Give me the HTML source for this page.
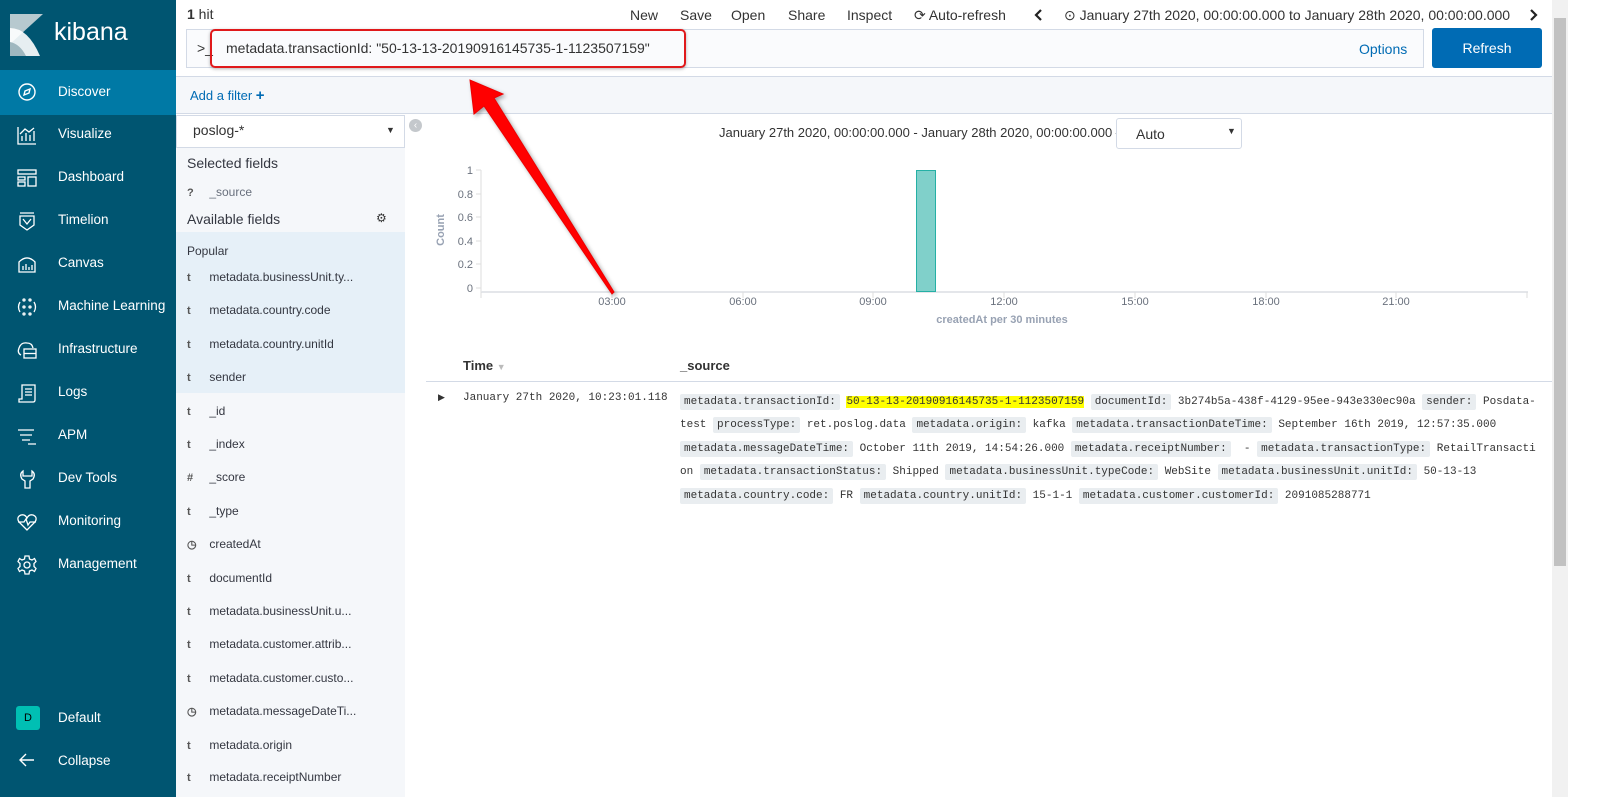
<!DOCTYPE html>
<html><head><meta charset="utf-8"><style>
*{margin:0;padding:0;box-sizing:border-box}
body{width:1600px;height:797px;overflow:hidden;font-family:"Liberation Sans",sans-serif;background:#fff;position:relative;color:#333}
.a{position:absolute;white-space:nowrap}
#side{position:absolute;left:0;top:0;width:176px;height:797px;background:#005571}
.nav{position:absolute;left:0;width:176px;height:43px;color:#fff;font-size:13.5px}
.nav span{position:absolute;left:58px;top:13px}
.nav svg{position:absolute;left:16px;top:11px}
.mono{font-family:"Liberation Mono",monospace;font-size:11px}
.k{background:#e9edf0;padding:2px 4px;border-radius:2px;color:#333;white-space:nowrap}
.f{position:absolute;left:187px;font-size:12px;color:#343741}
.f b{display:inline-block;width:19px;font-size:11px;color:#555}
</style></head><body>
<div id="side">
 <svg class="a" style="left:10px;top:14px" width="33" height="42" viewBox="0 0 33 42"><path d="M0 0H33L0 30Z" fill="#b7c9cf"/><path d="M0 14 Q18 14 30 42 H0Z" fill="#fff" opacity=".9"/><path d="M0 28 Q10 30 16 42H0Z" fill="#9fb7bf"/></svg>
 <div class="a" style="left:54px;top:18px;color:#fff;font-size:25px">kibana</div>
 <div class="nav" style="top:70px;height:45px;background:#0079a5"><svg width="22" height="22" viewBox="0 0 22 22" fill="none" stroke="#fff" stroke-width="1.4"><circle cx="11" cy="11" r="8"/><path d="M14 8 L9 10 L8 14 L13 12Z"/></svg><span style="top:14px">Discover</span></div>
 <div class="nav" style="top:113px"><svg width="22" height="22" viewBox="0 0 22 22" fill="none" stroke="#fff" stroke-width="1.3"><path d="M2 3V20H20M6 17V12M10 17V9M14 17V11M18 17V7M4 10L9 5L13 8L18 4"/></svg><span>Visualize</span></div>
 <div class="nav" style="top:156px"><svg width="22" height="22" viewBox="0 0 22 22" fill="none" stroke="#fff" stroke-width="1.3"><rect x="2" y="3" width="18" height="4"/><rect x="2" y="10" width="7" height="3"/><rect x="2" y="15" width="7" height="4"/><rect x="12" y="10" width="8" height="9"/></svg><span>Dashboard</span></div>
 <div class="nav" style="top:199px"><svg width="22" height="22" viewBox="0 0 22 22" fill="none" stroke="#fff" stroke-width="1.3"><path d="M4 3H18M4 6H18V15L11 20L4 15Z M7 9L11 14L15 9"/></svg><span>Timelion</span></div>
 <div class="nav" style="top:242px"><svg width="22" height="22" viewBox="0 0 22 22" fill="none" stroke="#fff" stroke-width="1.3"><path d="M3 9Q11 1 19 9V19H3Z M7 17V13M10 17V11M13 17V14M16 17V12"/></svg><span>Canvas</span></div>
 <div class="nav" style="top:285px"><svg width="22" height="22" viewBox="0 0 22 22" fill="none" stroke="#fff" stroke-width="1.3"><circle cx="8" cy="4" r="1"/><circle cx="14" cy="4" r="1"/><circle cx="8" cy="11" r="1"/><circle cx="14" cy="11" r="1"/><circle cx="8" cy="18" r="1"/><circle cx="14" cy="18" r="1"/><path d="M4 6Q1 11 4 16M18 6Q21 11 18 16"/></svg><span>Machine Learning</span></div>
 <div class="nav" style="top:328px"><svg width="22" height="22" viewBox="0 0 22 22" fill="none" stroke="#fff" stroke-width="1.3"><path d="M5 16Q1 14 3 9Q5 3 11 4Q16 4 17 9"/><rect x="8" y="10" width="12" height="9"/><path d="M8 14.5H20"/></svg><span>Infrastructure</span></div>
 <div class="nav" style="top:371px"><svg width="22" height="22" viewBox="0 0 22 22" fill="none" stroke="#fff" stroke-width="1.3"><path d="M6 3H19V18Q19 20 17 20H3V17H6Z M9 7H16M9 10H16M9 13H16"/></svg><span>Logs</span></div>
 <div class="nav" style="top:414px"><svg width="22" height="22" viewBox="0 0 22 22" fill="none" stroke="#fff" stroke-width="1.3"><path d="M2 5H18M4 10H16M6 15H14M12 19H20"/></svg><span>APM</span></div>
 <div class="nav" style="top:457px"><svg width="22" height="22" viewBox="0 0 22 22" fill="none" stroke="#fff" stroke-width="1.3"><path d="M7 3Q3 6 6 11L9 13V20H14V13L17 11Q20 6 16 3V8H7Z"/></svg><span>Dev Tools</span></div>
 <div class="nav" style="top:500px"><svg width="22" height="22" viewBox="0 0 22 22" fill="none" stroke="#fff" stroke-width="1.3"><path d="M11 19L3 11Q0 6 5 4Q9 3 11 7Q13 3 17 4Q22 6 19 11Z M2 11H8L10 8L12 14L14 11H20"/></svg><span>Monitoring</span></div>
 <div class="nav" style="top:543px"><svg width="22" height="22" viewBox="0 0 22 22" fill="none" stroke="#fff" stroke-width="1.3"><circle cx="11" cy="11" r="3"/><path d="M9 2H13L13.5 5L16 6L18.5 4.5L20 7.5L18 9.5V12.5L20 14.5L18.5 17.5L16 16L13.5 17L13 20H9L8.5 17L6 16L3.5 17.5L2 14.5L4 12.5V9.5L2 7.5L3.5 4.5L6 6L8.5 5Z"/></svg><span>Management</span></div>
 <div class="a" style="left:16px;top:706px;width:24px;height:24px;background:#00bfb3;border-radius:3px;color:#000;font-size:11px;text-align:center;line-height:24px">D</div>
 <div class="a" style="left:58px;top:710px;color:#fff;font-size:13.5px">Default</div>
 <svg class="a" style="left:18px;top:752px" width="18" height="16" viewBox="0 0 18 16" fill="none" stroke="#fff" stroke-width="1.4"><path d="M16 8H2M8 2L2 8L8 14"/></svg>
 <div class="a" style="left:58px;top:753px;color:#fff;font-size:13.5px">Collapse</div>
</div>

<div class="a" style="left:187px;top:6px;font-size:14px"><b>1</b> hit</div>
<div class="a" style="left:630px;top:7px;font-size:14px">New</div>
<div class="a" style="left:680px;top:7px;font-size:14px">Save</div>
<div class="a" style="left:731px;top:7px;font-size:14px">Open</div>
<div class="a" style="left:788px;top:7px;font-size:14px">Share</div>
<div class="a" style="left:847px;top:7px;font-size:14px">Inspect</div>
<div class="a" style="left:914px;top:7px;font-size:14px">⟳ Auto-refresh</div>
<svg class="a" style="left:1033px;top:8px" width="10" height="14" viewBox="0 0 10 14"><path d="M8 2L3 7L8 12" fill="none" stroke="#222" stroke-width="2.2"/></svg>
<div class="a" style="left:1064px;top:7px;font-size:14px">⊙ January 27th 2020, 00:00:00.000 to January 28th 2020, 00:00:00.000</div>
<svg class="a" style="left:1529px;top:8px" width="10" height="14" viewBox="0 0 10 14"><path d="M2 2L7 7L2 12" fill="none" stroke="#222" stroke-width="2.2"/></svg>
<div class="a" style="left:186px;top:29px;width:1238px;height:39px;background:#fafbfd;border:1px solid #d3dae6"></div>
<div class="a" style="left:197px;top:40px;font-size:14px">&gt;_</div>
<div class="a" style="left:226px;top:40px;font-size:14px;color:#333">metadata.transactionId: "50-13-13-20190916145735-1-1123507159"</div>
<div class="a" style="left:210px;top:29px;width:476px;height:39px;border:2px solid #e0191b;border-radius:5px;box-shadow:0 1px 3px rgba(0,0,0,.3)"></div>
<div class="a" style="left:1359px;top:41px;font-size:14px;color:#006bb4">Options</div>
<div class="a" style="left:1432px;top:28px;width:110px;height:40px;background:#006bb4;border-radius:3px;color:#fff;font-size:14px;text-align:center;line-height:40px">Refresh</div>
<div class="a" style="left:176px;top:76px;width:1376px;height:38px;background:#f5f7fa;border-top:1px solid #d3dae6;border-bottom:1px solid #d3dae6"></div>
<div class="a" style="left:190px;top:87px;font-size:13px;color:#006bb4">Add a filter <b style="font-size:15px">+</b></div>

<div class="a" style="left:176px;top:115px;width:229px;height:682px;background:#f5f7fa"></div>
<div class="a" style="left:176px;top:115px;width:229px;height:33px;background:#fff;border:1px solid #d3dae6"></div>
<div class="a" style="left:193px;top:122px;font-size:14px">poslog-*</div>
<div class="a" style="left:386px;top:125px;font-size:9px">▼</div>
<div class="a" style="left:409px;top:119px;width:13px;height:13px;border-radius:50%;background:#c4c8cc;color:#fff;font-size:10px;line-height:13px;text-align:center">‹</div>
<div class="a" style="left:187px;top:155px;font-size:14px;color:#343741">Selected fields</div>
<div class="f" style="top:185px;color:#69707d"><b>?</b> _source</div>
<div class="a" style="left:187px;top:211px;font-size:14px;color:#343741">Available fields</div>
<div class="a" style="left:376px;top:211px;font-size:12px">⚙</div>
<div class="a" style="left:176px;top:232px;width:229px;height:161px;background:#e6f0f8"></div>
<div class="a" style="left:187px;top:244px;font-size:12px;color:#343741">Popular</div>
<div class="f" style="top:270px"><b>t</b> metadata.businessUnit.ty...</div>
<div class="f" style="top:303px"><b>t</b> metadata.country.code</div>
<div class="f" style="top:337px"><b>t</b> metadata.country.unitId</div>
<div class="f" style="top:370px"><b>t</b> sender</div>
<div class="f" style="top:404px"><b>t</b> _id</div>
<div class="f" style="top:437px"><b>t</b> _index</div>
<div class="f" style="top:470px"><b>#</b> _score</div>
<div class="f" style="top:504px"><b>t</b> _type</div>
<div class="f" style="top:537px"><b>◷</b> createdAt</div>
<div class="f" style="top:571px"><b>t</b> documentId</div>
<div class="f" style="top:604px"><b>t</b> metadata.businessUnit.u...</div>
<div class="f" style="top:637px"><b>t</b> metadata.customer.attrib...</div>
<div class="f" style="top:671px"><b>t</b> metadata.customer.custo...</div>
<div class="f" style="top:704px"><b>◷</b> metadata.messageDateTi...</div>
<div class="f" style="top:738px"><b>t</b> metadata.origin</div>
<div class="f" style="top:770px"><b>t</b> metadata.receiptNumber</div>

<div class="a" style="left:719px;top:125px;font-size:13px">January 27th 2020, 00:00:00.000 - January 28th 2020, 00:00:00.000 —</div>
<div class="a" style="left:1116px;top:118px;width:126px;height:31px;border:1px solid #d3dae6;border-radius:3px;background:#fff"></div>
<div class="a" style="left:1136px;top:126px;font-size:14px">Auto</div>
<div class="a" style="left:1227px;top:126px;font-size:9px">▼</div>
<svg class="a" style="left:420px;top:150px" width="1120" height="190">
 <g font-family="Liberation Sans" font-size="11" fill="#6a717d">
  <text x="53" y="24" text-anchor="end">1</text><text x="53" y="48" text-anchor="end">0.8</text><text x="53" y="71" text-anchor="end">0.6</text><text x="53" y="95" text-anchor="end">0.4</text><text x="53" y="118" text-anchor="end">0.2</text><text x="53" y="142" text-anchor="end">0</text>
  <text transform="translate(24,80) rotate(-90)" text-anchor="middle" font-weight="bold" fill="#98a2b3">Count</text>
  <text x="192" y="155" text-anchor="middle">03:00</text><text x="323" y="155" text-anchor="middle">06:00</text><text x="453" y="155" text-anchor="middle">09:00</text><text x="584" y="155" text-anchor="middle">12:00</text><text x="715" y="155" text-anchor="middle">15:00</text><text x="846" y="155" text-anchor="middle">18:00</text><text x="976" y="155" text-anchor="middle">21:00</text>
  <text x="582" y="173" text-anchor="middle" font-weight="bold" fill="#98a2b3">createdAt per 30 minutes</text>
 </g>
 <path d="M61 20V142M56 20H61M56 44H61M56 67H61M56 91H61M56 114H61M56 138H61" stroke="#ddd"/>
 <path d="M61 142H1108" stroke="#e4e6ea" stroke-width="2"/>
 <path d="M61 142V148M192 142V148M323 142V148M453 142V148M584 142V148M715 142V148M846 142V148M976 142V148M1107 142V148" stroke="#ddd"/>
 <rect x="496.5" y="20.5" width="19" height="121" fill="#80d0ca" stroke="#25b0a5"/>
</svg>

<div class="a" style="left:463px;top:358px;font-size:13px;font-weight:bold;color:#333">Time <span style="color:#bbb;font-size:9px">▼</span></div>
<div class="a" style="left:680px;top:358px;font-size:13px;font-weight:bold;color:#333">_source</div>
<div class="a" style="left:426px;top:381px;width:1126px;height:1px;background:#d3dae6"></div>
<div class="a" style="left:438px;top:392px;font-size:9px">▶</div>
<div class="a mono" style="left:463px;top:392px">January 27th 2020, 10:23:01.118</div>
<div class="a mono" style="left:680px;top:391px;line-height:23.4px;white-space:normal;width:856px;word-break:break-all"><span class="k">metadata.transactionId:</span> <span style="background:#ff0">50-13-13-20190916145735-1-1123507159</span> <span class="k">documentId:</span> 3b274b5a-438f-4129-95ee-943e330ec90a <span class="k">sender:</span> Posdata-test <span class="k">processType:</span> ret.poslog.data <span class="k">metadata.origin:</span> kafka <span class="k">metadata.transactionDateTime:</span> September 16th 2019, 12:57:35.000 <span class="k">metadata.messageDateTime:</span> October 11th 2019, 14:54:26.000 <span class="k">metadata.receiptNumber:</span> &nbsp;- <span class="k">metadata.transactionType:</span> RetailTransaction <span class="k">metadata.transactionStatus:</span> Shipped <span class="k">metadata.businessUnit.typeCode:</span> WebSite <span class="k">metadata.businessUnit.unitId:</span> 50-13-13 <span class="k">metadata.country.code:</span> FR <span class="k">metadata.country.unitId:</span> 15-1-1 <span class="k">metadata.customer.customerId:</span> 2091085288771</div>

<div class="a" style="left:1552px;top:0;width:16px;height:797px;background:#f1f1f1"></div>
<div class="a" style="left:1554px;top:18px;width:12px;height:548px;background:#c1c1c1"></div>
<div class="a" style="left:1568px;top:0;width:32px;height:797px;background:#fff"></div>

<svg class="a" style="left:0;top:0" width="1600" height="797">
 <path d="M614 292 L494 98 L503 94 L470 80 L474 114 L484 106 L612 294Z" fill="#f00" stroke="#e00" stroke-width="1" style="filter:drop-shadow(2px 2px 2px rgba(0,0,0,.35))"/>
</svg>
</body></html>
